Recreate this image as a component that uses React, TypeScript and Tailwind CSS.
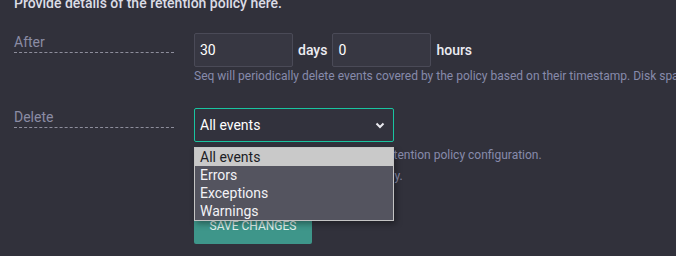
import React from "react";

export default function App() {
  const options = ["All events", "Errors", "Exceptions", "Warnings"];
  return (
    <div className="w-[676px] h-[256px] overflow-hidden bg-[#31313b] font-['Roboto',sans-serif]">
      <div className="pl-[14px]">
        <div className="mt-[-7px] text-[14px] leading-[20px] font-medium text-[#dcdde6] whitespace-nowrap">
          Provide details of the retention policy here.
        </div>

        {/* After row */}
        <div className="mt-[19px] flex items-start">
          <div className="w-[160px] shrink-0 mr-[20px] border-b border-dashed border-[#8e8e9c] text-[14px] leading-[20px] text-[#8b8ca4]">
            After
          </div>
          <div className="pt-[1px] min-w-0">
            <div className="flex items-center">
              <div className="w-[99px] h-[34px] shrink-0 border border-[#4a4a57] bg-[#373742] rounded-[2px] flex items-center pl-[5px] text-[14px] text-white">
                30
              </div>
              <span className="mx-[5px] text-[14px] font-medium text-[#ececf2]">days</span>
              <div className="w-[99px] h-[34px] shrink-0 border border-[#4a4a57] bg-[#373742] rounded-[2px] flex items-center pl-[5px] text-[14px] text-white">
                0
              </div>
              <span className="ml-[5px] text-[14px] font-medium text-[#ececf2]">hours</span>
            </div>
            <div className="mt-[1px] text-[12px] leading-[16px] text-[#878bab] whitespace-nowrap">
              Seq will periodically delete events covered by the policy based on their timestamp. Disk space will be reclaimed gradually.
            </div>
          </div>
        </div>

        {/* Delete row */}
        <div className="mt-[23px] flex items-start">
          <div className="w-[160px] shrink-0 mr-[20px] border-b border-dashed border-[#8e8e9c] text-[14px] leading-[20px] text-[#8b8ca4]">
            Delete
          </div>
          <div className="pt-[1px] relative">
            <div className="w-[200px] h-[34px] border border-[#19c4a0] bg-[#32323d] rounded-[2px] flex items-center justify-between pl-[5px] pr-[8px] text-[14px] text-white">
              <span>All events</span>
              <svg width="10" height="7" viewBox="0 0 10 7" className="mt-[1px]">
                <polyline points="1.5,1.5 5,5 8.5,1.5" fill="none" stroke="#e8e8ee" strokeWidth="2" />
              </svg>
            </div>
            <div className="mt-[3px] text-[12px] leading-[21px] text-[#878bab] whitespace-nowrap">
              <div>Choose the events removed via the retention policy configuration.</div>
              <div>Matching events are removed regularly.</div>
            </div>
            <button className="mt-[21px] w-[118px] h-[36px] bg-[#3e968a] rounded-[2px] text-[12px] text-[#e3f2ef] uppercase">
              Save changes
            </button>

            {/* open select list */}
            <div className="absolute left-0 top-[40px] w-[200px] border border-[#c4c4c4] bg-[#54545f] shadow-[2px_3px_6px_rgba(0,0,0,0.35)]">
              {options.map((o, i) => (
                <div
                  key={o}
                  className={
                    i === 0
                      ? "h-[18px] leading-[18px] pl-[5px] text-[14px] bg-[#c9c9c9] text-[#1d1d24]"
                      : "h-[18px] leading-[18px] pl-[5px] text-[14px] text-[#f2f2f6]"
                  }
                >
                  {o}
                </div>
              ))}
            </div>
          </div>
        </div>
      </div>
    </div>
  );
}
